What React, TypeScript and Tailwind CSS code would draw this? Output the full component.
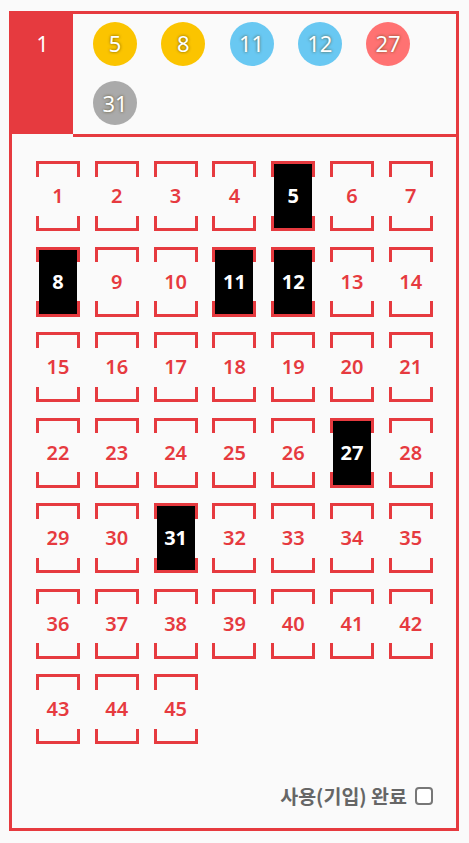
import React from "react";

const RED = "border-[#e63a3f]";

const balls: { n: number; c: string }[] = [
  { n: 5, c: "bg-[#fbc400]" },
  { n: 8, c: "bg-[#fbc400]" },
  { n: 11, c: "bg-[#69c8f2]" },
  { n: 12, c: "bg-[#69c8f2]" },
  { n: 27, c: "bg-[#ff7272]" },
  { n: 31, c: "bg-[#aaaaaa]" },
];

const selected = new Set([5, 8, 11, 12, 27, 31]);

function Cell({ n }: { n: number }) {
  const sel = selected.has(n);
  return (
    <div className="flex flex-col w-[44px] h-[70px]">
      <div
        className={`h-[15.5px] border-t-[3px] border-x-[3px] ${RED} ${sel ? "bg-black" : ""}`}
      />
      <div
        className={`flex-1 mx-[3px] flex items-center justify-center text-[20px] leading-none ${
          sel ? "bg-black text-white font-bold" : "text-[#e63a3f] font-semibold"
        }`}
      >
        {n}
      </div>
      <div
        className={`h-[15.5px] border-b-[3px] border-x-[3px] ${RED} ${sel ? "bg-black" : ""}`}
      />
    </div>
  );
}

export default function App() {
  const nums = Array.from({ length: 45 }, (_, i) => i + 1);
  return (
    <div
      className="w-[469px] h-[843px] bg-[#fafafa] pt-[11px] pl-[9px]"
      style={{ fontFamily: '"Noto Sans", "Noto Sans CJK KR", sans-serif' }}
    >
      <div className={`w-[450px] h-[820px] border-[3px] ${RED} flex flex-col`}>
        <div className="flex h-[123px] items-start">
          <div className="w-[61px] h-[120px] bg-[#e63a3f] flex justify-center pt-[16px] text-white text-[21px] leading-[28px]">
            1
          </div>
          <div className={`flex-1 h-[123px] border-b-[3px] ${RED} pl-[20px] pt-[7.7px]`}>
            <div className="flex flex-wrap gap-x-[24.25px] gap-y-[15.5px]">
              {balls.map((b) => (
                <div
                  key={b.n}
                  className={`w-[44px] h-[44px] rounded-full ${b.c} flex items-center justify-center text-white text-[22px] font-normal [text-shadow:0_0_3px_rgba(73,57,0,0.8)]`}
                >
                  {b.n}
                </div>
              ))}
            </div>
          </div>
        </div>
        <div className="flex-1 flex flex-col pt-[24px] pl-[24px] pr-[23px]">
          <div className="grid grid-cols-[repeat(7,44px)] gap-x-[14.8px] gap-y-[15.5px]">
            {nums.map((n) => (
              <Cell key={n} n={n} />
            ))}
          </div>
          <div className="mt-[40px] flex justify-end items-center gap-[8px]">
            <span
              className="text-[19.5px] font-semibold text-[#666666] leading-[24px]"
              style={{ fontFamily: '"Noto Sans CJK KR", sans-serif' }}
            >
              사용(기입) 완료
            </span>
            <span className="w-[18px] h-[18px] border-2 border-[#777777] rounded-[4px] bg-white inline-block" />
          </div>
        </div>
      </div>
    </div>
  );
}
